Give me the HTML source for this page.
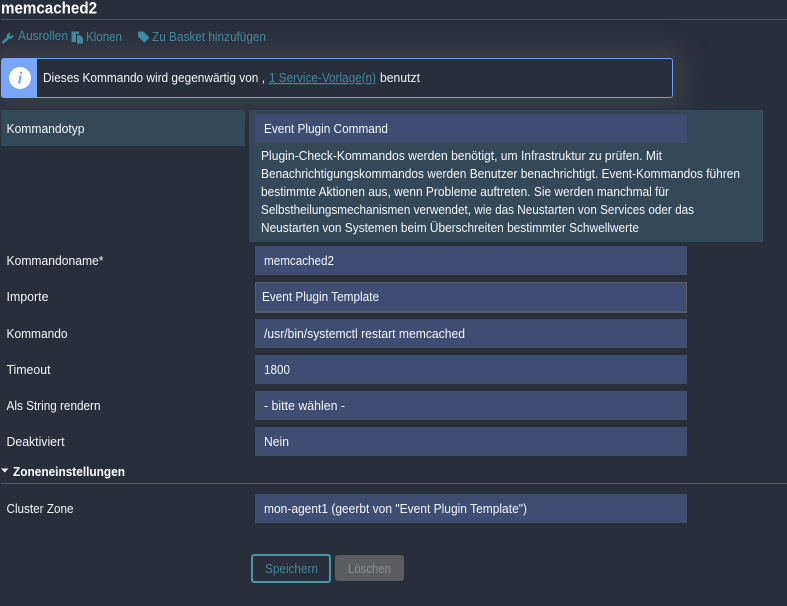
<!DOCTYPE html>
<html lang="de"><head><meta charset="utf-8"><title>memcached2</title>
<style>
html,body{margin:0;padding:0;width:787px;height:606px;overflow:hidden;background:#282e3a}
.b{position:absolute}
.f{position:absolute;left:255px;width:432px;height:28px;background:#3f4d73;border-bottom:1px solid #4a4f5e}
svg{position:absolute;left:0;top:0}
text{font-family:"Liberation Sans",sans-serif;font-size:12.500px;fill:#f4f6f8}
.l{fill:#3f8aa3}
</style></head><body>
<div class="b" style="left:1px;top:58px;width:672px;height:40px;box-shadow:0 0 26px 12px rgba(120,120,125,.22);border-radius:3px"></div>
<div class="b" style="left:1px;top:58px;width:670px;height:38px;background:#282e3a;border:1px solid #6f9ff0;border-radius:3px"></div>
<div class="b" style="left:1px;top:58px;width:36px;height:40px;background:#78a6fb;border-radius:3px 0 0 3px"></div>
<div class="b" style="left:1px;top:19px;width:786px;height:1px;background:#50545c"></div>
<div class="b" style="left:1px;top:110px;width:244px;height:36px;background:#33495a"></div>
<div class="b" style="left:249px;top:110px;width:514px;height:132px;background:#33495a"></div>
<div class="f" style="top:114px"></div>
<div class="f" style="top:246px"></div>
<div class="b" style="left:255px;top:282px;width:430px;height:28px;background:#3f4d73;border:1px solid #565a62;border-bottom-width:2px"></div>
<div class="f" style="top:319px"></div>
<div class="f" style="top:355px"></div>
<div class="f" style="top:391px"></div>
<div class="f" style="top:427px"></div>
<div class="b" style="left:1px;top:483px;width:786px;height:1px;background:#5a5d62"></div>
<div class="b" style="left:255px;top:494px;width:432px;height:29px;background:#3f4d73"></div>
<div class="b" style="left:251px;top:554px;width:76px;height:25px;border:2px solid #4b93aa;border-radius:3px"></div>
<div class="b" style="left:335px;top:555px;width:69px;height:26px;background:#5c5d60;border-radius:3px"></div>
<svg width="787" height="606" viewBox="0 0 787 606">
<text x="1" y="13.500" style="font-size:17px;font-weight:bold;fill:#fff" textLength="96" lengthAdjust="spacingAndGlyphs">memcached2</text>

<path d="M1.500 42 L3.500 44 L9 38.500 C11.500 39.200 13.500 37.600 13.500 34.500 L11.200 36.400 L9.400 35.200 L10.800 32.800 C7.800 32.600 6 34.800 6.800 37 Z" fill="#3f8aa3"/>
<text class="l" x="18" y="40" textLength="50" lengthAdjust="spacingAndGlyphs">Ausrollen</text>
<path d="M71.500 31.500 h7.500 v2.500 h-3 v8 h-4.500 Z M77 35 h3 l3 3 v5.500 h-6 Z" fill="#3f8aa3"/>
<text class="l" x="86" y="41" textLength="36" lengthAdjust="spacingAndGlyphs">Klonen</text>
<path d="M138 31.500 h5.500 l6 6 l-5 5.300 l-6.500 -6.300 Z" fill="#3f8aa3"/>
<text class="l" x="152" y="41" textLength="114" lengthAdjust="spacingAndGlyphs">Zu Basket hinzufügen</text>

<circle cx="20" cy="78" r="11" fill="#fff"/>
<text x="20" y="83.500" text-anchor="middle" style="font-family:'Liberation Serif',serif;font-size:17px;font-weight:bold;font-style:italic;fill:#78a6fb">i</text>
<text x="43" y="82" textLength="222" lengthAdjust="spacingAndGlyphs">Dieses Kommando wird gegenwärtig von ,</text>
<text class="l" x="269" y="82" textLength="107" lengthAdjust="spacingAndGlyphs" text-decoration="underline">1 Service-Vorlage(n)</text>
<text x="380" y="82" textLength="40" lengthAdjust="spacingAndGlyphs">benutzt</text>

<text x="6.500" y="133" textLength="78" lengthAdjust="spacingAndGlyphs">Kommandotyp</text>
<text x="264" y="133" textLength="124" lengthAdjust="spacingAndGlyphs">Event Plugin Command</text>
<text x="261" y="160" textLength="401" lengthAdjust="spacingAndGlyphs">Plugin-Check-Kommandos werden benötigt, um Infrastruktur zu prüfen. Mit</text>
<text x="261" y="178" textLength="479" lengthAdjust="spacingAndGlyphs">Benachrichtigungskommandos werden Benutzer benachrichtigt. Event-Kommandos führen</text>
<text x="261" y="196" textLength="408" lengthAdjust="spacingAndGlyphs">bestimmte Aktionen aus, wenn Probleme auftreten. Sie werden manchmal für</text>
<text x="261" y="214" textLength="433" lengthAdjust="spacingAndGlyphs">Selbstheilungsmechanismen verwendet, wie das Neustarten von Services oder das</text>
<text x="261" y="232" textLength="378" lengthAdjust="spacingAndGlyphs">Neustarten von Systemen beim Überschreiten bestimmter Schwellwerte</text>

<text x="6.500" y="265" textLength="97" lengthAdjust="spacingAndGlyphs">Kommandoname*</text>
<text x="264" y="265" textLength="70" lengthAdjust="spacingAndGlyphs">memcached2</text>
<text x="6.500" y="301" textLength="42" lengthAdjust="spacingAndGlyphs">Importe</text>
<text x="262" y="301" textLength="117" lengthAdjust="spacingAndGlyphs">Event Plugin Template</text>
<text x="6.500" y="338" textLength="61" lengthAdjust="spacingAndGlyphs">Kommando</text>
<text x="264" y="338" textLength="201" lengthAdjust="spacingAndGlyphs">/usr/bin/systemctl restart memcached</text>
<text x="6.500" y="374" textLength="44" lengthAdjust="spacingAndGlyphs">Timeout</text>
<text x="264" y="374" textLength="26" lengthAdjust="spacingAndGlyphs">1800</text>
<text x="6.500" y="410" textLength="94" lengthAdjust="spacingAndGlyphs">Als String rendern</text>
<text x="264" y="410" textLength="81" lengthAdjust="spacingAndGlyphs">- bitte wählen -</text>
<text x="6.500" y="446" textLength="58" lengthAdjust="spacingAndGlyphs">Deaktiviert</text>
<text x="264" y="446" textLength="25" lengthAdjust="spacingAndGlyphs">Nein</text>

<path d="M1 468.500 h7.500 l-3.750 4 Z" fill="#fff"/>
<text x="13" y="476" style="font-weight:bold;fill:#fff" textLength="112" lengthAdjust="spacingAndGlyphs">Zoneneinstellungen</text>
<text x="6.500" y="513" textLength="67" lengthAdjust="spacingAndGlyphs">Cluster Zone</text>
<text x="264" y="513" textLength="263" lengthAdjust="spacingAndGlyphs">mon-agent1 (geerbt von "Event Plugin Template")</text>

<text class="l" x="265" y="573" textLength="53" lengthAdjust="spacingAndGlyphs">Speichern</text>
<text x="348" y="573" style="fill:#8b8c8f" textLength="43" lengthAdjust="spacingAndGlyphs">Löschen</text>
</svg>
</body></html>
